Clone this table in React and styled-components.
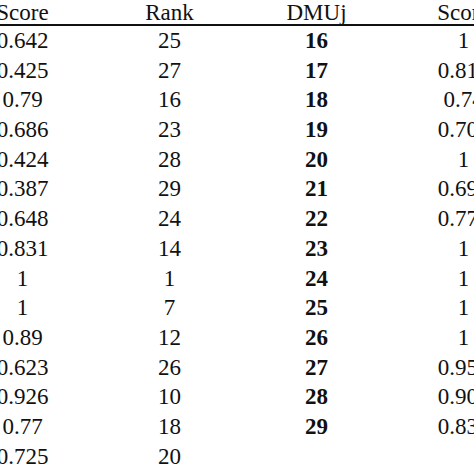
import React from "react";
import styled, { createGlobalStyle } from "styled-components";

const GlobalStyle = createGlobalStyle`
  html, body {
    margin: 0;
    padding: 0;
    background: #ffffff;
    overflow: hidden;
  }
`;

// the table is cropped: its first column sits left of the window
const Table = styled.div`
  width: 588px;
  margin-left: -51px;
  padding-top: 1px;
  font-family: "Liberation Serif", "Times New Roman", serif;
  font-size: 23px;
  color: #111111;
`;

const Row = styled.div`
  display: grid;
  grid-template-columns: repeat(4, 147px);
  height: ${(p) => (p.$head ? "23px" : "29.7px")};
  line-height: ${(p) => (p.$head ? "23px" : "29.7px")};
  border-bottom: ${(p) => (p.$head ? "2px solid #111" : "none")};
`;

const Cell = styled.div`
  text-align: center;
  white-space: nowrap;
  font-weight: ${(p) => (p.$bold ? 700 : 400)};
`;

const rows = [
  ["0.642", "25", "16", "1"],
  ["0.425", "27", "17", "0.814"],
  ["0.79", "16", "18", "0.74"],
  ["0.686", "23", "19", "0.703"],
  ["0.424", "28", "20", "1"],
  ["0.387", "29", "21", "0.695"],
  ["0.648", "24", "22", "0.772"],
  ["0.831", "14", "23", "1"],
  ["1", "1", "24", "1"],
  ["1", "7", "25", "1"],
  ["0.89", "12", "26", "1"],
  ["0.623", "26", "27", "0.953"],
  ["0.926", "10", "28", "0.904"],
  ["0.77", "18", "29", "0.835"],
  ["0.725", "20", "", ""],
];

export default function App() {
  return (
    <>
      <GlobalStyle />
      <Table>
        <Row $head>
          <Cell>Score</Cell>
          <Cell>Rank</Cell>
          <Cell>DMUj</Cell>
          <Cell>Score</Cell>
        </Row>
        {rows.map((r, i) => (
          <Row key={i}>
            <Cell>{r[0]}</Cell>
            <Cell>{r[1]}</Cell>
            <Cell $bold>{r[2]}</Cell>
            <Cell>{r[3]}</Cell>
          </Row>
        ))}
      </Table>
    </>
  );
}
